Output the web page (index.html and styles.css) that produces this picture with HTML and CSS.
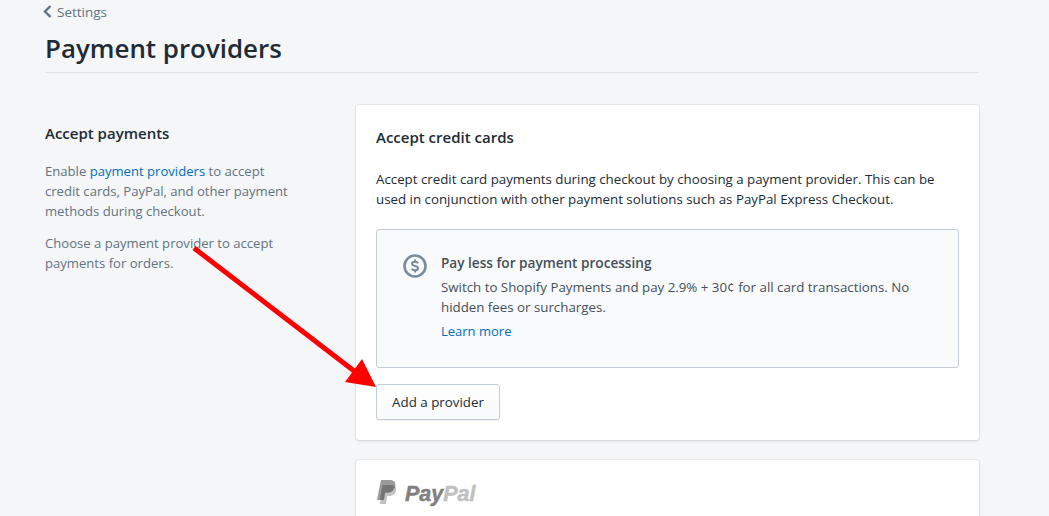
FILE: index.html
```html
<!DOCTYPE html>
<html lang="en">
<head>
<meta charset="utf-8">
<title>Payment providers</title>
<link rel="stylesheet" href="styles.css">
</head>
<body>
<div class="page">
  <header class="head">
    <a class="back" href="#">
      <svg class="chev" width="9" height="13" viewBox="0 0 9 13"><path d="M7.500 1 2 6.500 7.500 12" fill="none" stroke="#637381" stroke-width="2.400"/></svg>
      <span>Settings</span>
    </a>
    <h1 class="title">Payment providers</h1>
  </header>
  <main class="layout">
    <aside class="side">
      <h2 class="side-title">Accept payments</h2>
      <p class="side-text">Enable <a class="link-strong" href="#">payment providers</a> to accept credit cards, PayPal, and other payment methods during checkout.</p>
      <p class="side-text">Choose a payment provider to accept payments for orders.</p>
    </aside>
    <div class="cards">
      <section class="card">
        <h2 class="card-title">Accept credit cards</h2>
        <p class="card-text">Accept credit card payments during checkout by choosing a payment provider. This can be used in conjunction with other payment solutions such as PayPal Express Checkout.</p>
        <div class="banner">
          <svg class="banner-icon" width="24" height="24" viewBox="0 0 24 24">
            <circle cx="12" cy="12" r="10.500" fill="none" stroke="#798c9c" stroke-width="2.600"/>
            <path d="M15 9.300c-.4-1-1.500-1.600-3-1.600-1.800 0-3 .8-3 2.100 0 2.900 6.100 1.500 6.100 4.400 0 1.300-1.300 2.100-3.100 2.100-1.600 0-2.700-.6-3.100-1.600M12 5.500v2.200M12 16.300v2.200" fill="none" stroke="#798c9c" stroke-width="2"/>
          </svg>
          <div class="banner-body">
            <h3 class="banner-title">Pay less for payment processing</h3>
            <p class="banner-text">Switch to Shopify Payments and pay 2.9% + 30¢ for all card transactions. No hidden fees or surcharges.</p>
            <a class="banner-link" href="#">Learn more</a>
          </div>
        </div>
        <button class="btn" type="button">Add a provider</button>
      </section>
      <section class="card card-paypal">
        <svg class="pp-mark" width="20" height="24" viewBox="0 0 20 24">
          <path d="M6.500 5h7.500c3.800 0 5.700 1.600 5.200 5-.6 3.800-3.300 6-7 6h-2l-1.200 8H2.800z" fill="#c2c2c2"/>
          <path d="M4 0h8.500c4.500 0 6.500 2.200 5.800 6-.8 4.300-3.800 6.700-8 6.700H8L6.800 20H0z" fill="#9a9a9a"/>
          <path d="M5.500 5H14c1.500 0 2.800.3 3.800 1-.8 4.100-3.700 6.700-7.500 6.700H8L6.800 20H3z" fill="#757575"/>
        </svg>
        <span class="pp-word"><span class="pp-dark">Pay</span><span class="pp-light">Pal</span></span>
      </section>
    </div>
  </main>
</div>
<svg class="arrow" width="1049" height="516" viewBox="0 0 1049 516">
  <path d="M194 248 358 374" stroke="#fe0000" stroke-width="5" fill="none"/>
  <path d="M376 387 345 382 362 359z" fill="#fe0000"/>
</svg>
</body>
</html>
```
FILE: styles.css
```css
* { box-sizing: border-box; }
html, body { margin: 0; height: 516px; overflow: hidden; }
body {
  background: #f4f6f8;
  color: #212b36;
  font-family: "Open Sans", "Noto Sans", sans-serif;
  font-size: 13.300px;
  line-height: 20px;
}
.page { width: 934px; margin-left: 45px; }
.head { height: 73px; border-bottom: 1px solid #dfe3e8; }
.back {
  display: flex; align-items: center; gap: 5px;
  height: 24px; color: #637381; text-decoration: none;
  font-size: 13.500px; margin-left: -2px;
}
.chev { margin-top: -2px; }
.title {
  margin: 6px 0 0; font-size: 25.900px; line-height: 36px; font-weight: 600;
  color: #212b36;
}
.layout { display: flex; padding-top: 32px; }
.side { width: 311px; flex: none; padding-top: 18px; }
.side-title { margin: 0 0 18px; font-size: 15px; line-height: 20px; font-weight: 600; }
.side-text { margin: 0 0 12px; color: #637381; width: 250px; font-size: 13.100px; }
.link-strong { color: #006fbb; text-decoration: none; }
.cards { flex: 1; display: flex; flex-direction: column; gap: 20px; }
.card {
  background: #fff; border-radius: 3px; padding: 22px 20px 20px 20px;
  box-shadow: 0 0 0 1px rgba(63,63,68,.05), 0 1px 3px rgba(63,63,68,.15);
}
.card-title { margin: 0 0 22px; font-size: 15px; line-height: 20px; font-weight: 600; }
.card-text { margin: 0 0 20px; }
.banner {
  display: flex; gap: 14px; height: 139px; padding: 23px 26px;
  background: #f9fafb; border: 1px solid #c4cdd5; border-radius: 3px;
  margin-bottom: 16px;
}
.banner-icon { flex: none; margin-top: 1px; }
.banner-title { margin: 0 0 4px; font-size: 13.600px; line-height: 20px; font-weight: 600; color: #454f5b; }
.banner-text { margin: 0 0 4px; color: #454f5b; line-height: 20px; }
.banner-link { color: #006fbb; text-decoration: none; font-size: 13px; }
.btn {
  display: block; width: 124px; height: 36px; padding: 0;
  font: inherit; font-size: 13.350px; color: #212b36;
  background: linear-gradient(#fff, #f9fafb);
  border: 1px solid #c4cdd5; border-radius: 3px;
  box-shadow: 0 1px 0 rgba(22,29,37,.05);
}
.card-paypal { display: flex; gap: 8px; padding: 20px 21px; height: 100px; align-items: flex-start; }
.pp-word { font-size: 21.500px; line-height: 29px; font-weight: 700; font-style: italic; font-family: "Liberation Sans", sans-serif; -webkit-text-stroke: .5px currentColor; }
.pp-dark { color: #808080; }
.pp-light { color: #c0c0c0; }
.arrow { position: absolute; left: 0; top: 0; pointer-events: none; }
```
